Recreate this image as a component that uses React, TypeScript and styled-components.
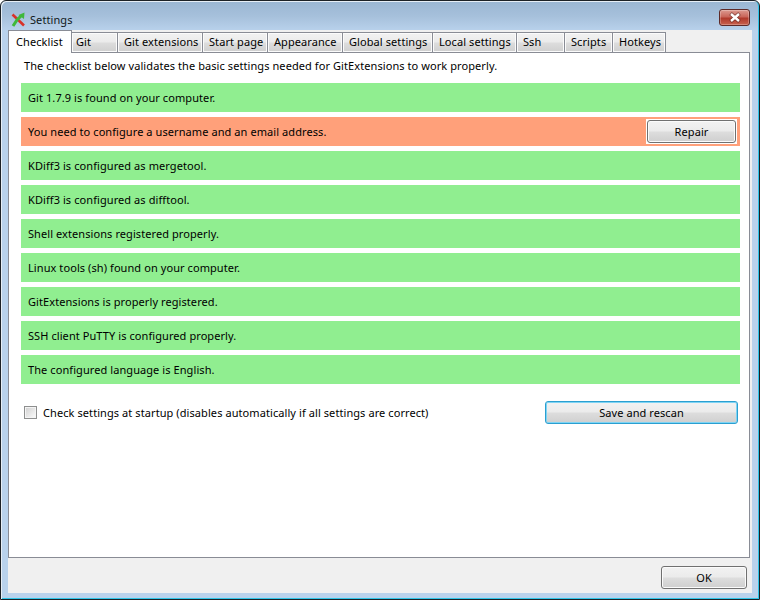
import React from "react";
import styled, { createGlobalStyle } from "styled-components";

const Global = createGlobalStyle`
  html, body { margin: 0; padding: 0; background: #fff; }
  body { font-family: "Noto Sans", "Open Sans", sans-serif; font-size: 11px; letter-spacing: 0.08px; color: #000; }
  * { box-sizing: border-box; }
`;

const Frame = styled.div`
  width: 760px;
  height: 600px;
  display: flex;
  flex-direction: column;
  padding: 0 7px 6px 7px;
  border: 1px solid #1c2126;
  border-radius: 6px 6px 0 0;
  box-shadow: inset 1px 1px 0 #e6eef6, inset -1px 0 0 #2fc5e8, inset 0 -1px 0 #2fc5e8;
  background: linear-gradient(180deg, #9ab6d3 0, #a6c0db 15px, #b9d2ec 30px, #b9d2ec 100%);
`;

const TitleBar = styled.header`
  height: 29px;
  flex: none;
  display: flex;
  align-items: center;
  gap: 4px;
  padding: 7px 2px 0 3px;
`;

const TitleText = styled.span`
  flex: 1;
  font-size: 11px;
  color: #101820;
`;

const CloseButton = styled.button`
  width: 31px;
  height: 17px;
  margin: -3px 0 0 0;
  padding: 0;
  display: flex;
  align-items: center;
  justify-content: center;
  border: 1px solid #5e2a28;
  border-radius: 3px;
  background: linear-gradient(180deg, #dc9a90 0, #c9665a 45%, #b03a2c 55%, #c8624e 100%);
  box-shadow: inset 0 0 0 1px rgba(255, 255, 255, 0.25);
`;

const Client = styled.div`
  flex: 1;
  min-height: 0;
  display: flex;
  flex-direction: column;
  background: #f0f0f0;
`;

const TabStrip = styled.div`
  height: 23px;
  flex: none;
  display: flex;
  align-items: flex-end;
  position: relative;
  z-index: 1;
  margin-bottom: -1px;
`;

const Tab = styled.div<{ $w: number; $active?: boolean; $pad: number }>`
  width: ${(p) => p.$w}px;
  height: ${(p) => (p.$active ? 23 : 21)}px;
  flex: none;
  padding-left: ${(p) => p.$pad}px;
  padding-top: ${(p) => (p.$active ? 1 : 0)}px;
  line-height: ${(p) => (p.$active ? 20 : 17)}px;
  white-space: nowrap;
  border: 1px solid #898c95;
  border-bottom: ${(p) => (p.$active ? "none" : "1px solid #898c95")};
  box-shadow: ${(p) => (p.$active ? "none" : "inset 0 0 0 1px #fbfbfb")};
  background: ${(p) =>
    p.$active ? "#fff" : "linear-gradient(180deg, #f2f2f2 0, #ebebeb 48%, #dddddd 52%, #cfcfcf 100%)"};
  margin-left: ${(p) => (p.$active ? 0 : -1)}px;
`;

const Page = styled.main`
  width: 742px;
  height: 506px;
  flex: none;
  display: flex;
  flex-direction: column;
  padding: 4px 9px 0 12px;
  background: #fff;
  border: 1px solid #898c95;
`;

const Intro = styled.p`
  margin: 0 0 9px 3px;
  height: 17px;
  line-height: 17px;
`;

const Checks = styled.div`
  display: flex;
  flex-direction: column;
  gap: 5px;
`;

const CheckRow = styled.div<{ $bad?: boolean }>`
  height: 29px;
  display: flex;
  align-items: center;
  justify-content: space-between;
  padding: 0 4px 0 7px;
  background: ${(p) => (p.$bad ? "#ffa07a" : "#90ee90")};
`;

const Button = styled.button<{ $w: number; $focus?: boolean }>`
  width: ${(p) => p.$w}px;
  height: 23px;
  flex: none;
  padding: 0;
  font: inherit;
  letter-spacing: inherit;
  color: #000;
  border: 1px solid ${(p) => (p.$focus ? "#2b9fd0" : "#707070")};
  border-radius: 3px;
  background: linear-gradient(180deg, #f2f2f2 0, #ebebeb 48%, #dddddd 52%, #cfcfcf 100%);
  box-shadow: inset 0 0 0 1px ${(p) => (p.$focus ? "#7fd4f4" : "#fbfbfb")};
`;

const RepairHalo = styled.span`
  display: flex;
  padding: 1px;
  margin: 0 -1px 0 0;
  background: #fff;
`;

const StartupRow = styled.div`
  margin-top: 16px;
  height: 24px;
  display: flex;
  align-items: center;
  justify-content: space-between;
  padding: 0 2px 0 3px;
`;

const CheckLabel = styled.label`
  display: flex;
  align-items: center;
  gap: 6px;
`;

const CheckBox = styled.span`
  width: 13px;
  height: 13px;
  flex: none;
  border: 1px solid #8e8f8f;
  background: linear-gradient(135deg, #cfcfcf 0, #e8e8e8 55%, #fdfdfd 100%);
  box-shadow: inset 0 0 0 1px #f4f4f4;
`;

const Footer = styled.footer`
  flex: 1;
  display: flex;
  justify-content: flex-end;
  padding: 8px 5px 0 0;
`;

const tabs: [string, number, number][] = [
  ["Checklist", 64, 7],
  ["Git", 47, 4],
  ["Git extensions", 86, 6],
  ["Start page", 66, 6],
  ["Appearance", 76, 6],
  ["Global settings", 91, 6],
  ["Local settings", 85, 6],
  ["Ssh", 49, 6],
  ["Scripts", 49, 6],
  ["Hotkeys", 54, 6],
];

const checks = [
  "Git 1.7.9 is found on your computer.",
  "You need to configure a username and an email address.",
  "KDiff3 is configured as mergetool.",
  "KDiff3 is configured as difftool.",
  "Shell extensions registered properly.",
  "Linux tools (sh) found on your computer.",
  "GitExtensions is properly registered.",
  "SSH client PuTTY is configured properly.",
  "The configured language is English.",
];

const AppIcon = () => (
  <svg width="15" height="15" viewBox="0 0 15 15" fill="none">
    <path d="M1.5 2.5 L13 13.5" stroke="#d8322a" strokeWidth="2.6" />
    <path d="M2 14 L6 8 L10 4" stroke="#3fb83a" strokeWidth="3" />
    <path d="M7.5 3 L13.5 0.5 L13 7 Z" fill="#3fb83a" />
  </svg>
);

const CloseGlyph = () => (
  <svg width="14" height="11" viewBox="0 0 14 11">
    <path d="M2.5 1.5 L11.5 9.5 M11.5 1.5 L2.5 9.5" stroke="#4a1f1c" strokeWidth="4" opacity="0.55" />
    <path d="M3 2 L11 9 M11 2 L3 9" stroke="#ffffff" strokeWidth="2.4" />
  </svg>
);

export default function App() {
  return (
    <>
      <Global />
      <Frame>
        <TitleBar>
          <AppIcon />
          <TitleText>Settings</TitleText>
          <CloseButton aria-label="Close">
            <CloseGlyph />
          </CloseButton>
        </TitleBar>
        <Client>
          <TabStrip>
            {tabs.map(([t, w, pad], i) => (
              <Tab key={t} $w={w} $pad={pad} $active={i === 0}>
                {t}
              </Tab>
            ))}
          </TabStrip>
          <Page>
            <Intro>The checklist below validates the basic settings needed for GitExtensions to work properly.</Intro>
            <Checks>
              {checks.map((c, i) => (
                <CheckRow key={c} $bad={i === 1}>
                  <span>{c}</span>
                  {i === 1 && (
                    <RepairHalo>
                      <Button $w={89}>Repair</Button>
                    </RepairHalo>
                  )}
                </CheckRow>
              ))}
            </Checks>
            <StartupRow>
              <CheckLabel>
                <CheckBox />
                Check settings at startup (disables automatically if all settings are correct)
              </CheckLabel>
              <Button $w={193} $focus>
                Save and rescan
              </Button>
            </StartupRow>
          </Page>
          <Footer>
            <Button $w={86}>OK</Button>
          </Footer>
        </Client>
      </Frame>
    </>
  );
}
